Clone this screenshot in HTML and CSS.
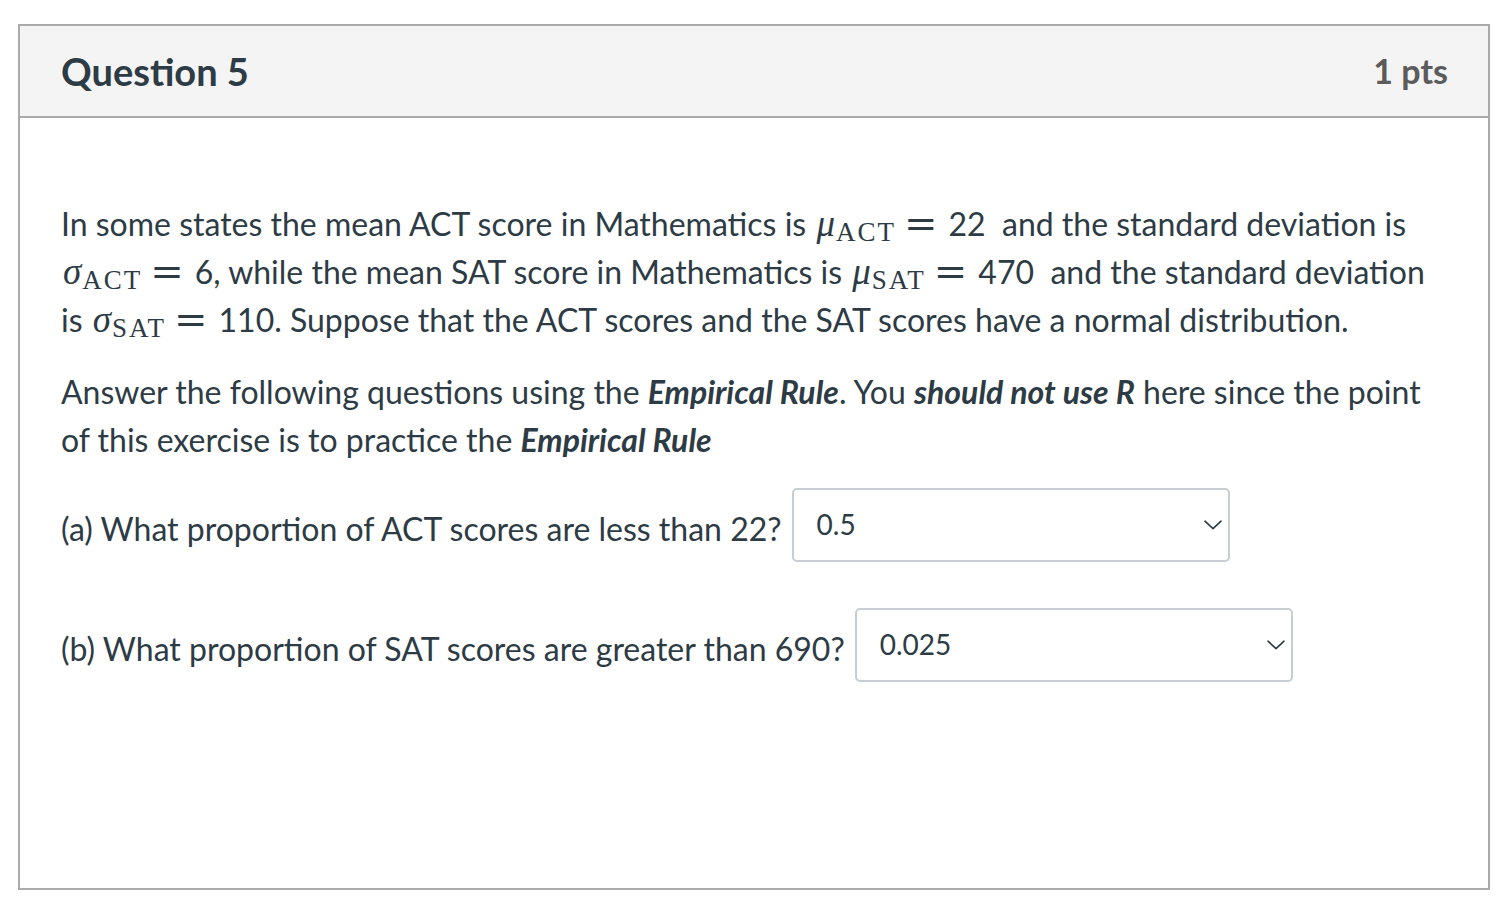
FILE: index.html
```html
<!DOCTYPE html>
<html lang="en">
<head>
<meta charset="utf-8">
<title>Question 5</title>
<link rel="stylesheet" href="styles.css">
</head>
<body>
<div class="quiz-question">
  <div class="q-header">
    <h2 class="q-title">Question 5</h2>
    <span class="q-pts">1 pts</span>
  </div>
  <div class="q-body">
    <p class="q-text">In some states the mean ACT score in Mathematics is <span class="math"><span class="mi">μ</span><span class="sub">ACT</span><span class="mo">=</span><span class="mn">22</span></span> &nbsp;and the standard deviation is <span class="math"><span class="mi">σ</span><span class="sub">ACT</span><span class="mo">=</span><span class="mn">6</span></span>, while the mean SAT score in Mathematics is <span class="math"><span class="mi">μ</span><span class="sub">SAT</span><span class="mo">=</span><span class="mn">470</span></span> &nbsp;and the standard deviation is <span class="math"><span class="mi">σ</span><span class="sub">SAT</span><span class="mo">=</span><span class="mn">110</span></span>. Suppose that the ACT scores and the SAT scores have a normal distribution.</p>
    <p class="q-text">Answer the following questions using the <strong><em>Empirical Rule</em></strong>. You <strong><em>should not use R</em></strong> here since the point of this exercise is to practice the <strong><em>Empirical Rule</em></strong></p>
    <div class="answer-row">
      <label class="answer-label" for="ans-a">(a) What proportion of ACT scores are less than 22?</label>
      <div class="select-wrap">
        <select id="ans-a" class="answer-select"><option>0.5</option></select>
        <svg class="chevron" viewBox="0 0 18 10" width="18" height="10"><path d="M1 1.2 L9 8.6 L17 1.2" fill="none" stroke="#2d3b45" stroke-width="1.6" stroke-linecap="round" stroke-linejoin="round"/></svg>
      </div>
    </div>
    <div class="answer-row">
      <label class="answer-label" for="ans-b">(b) What proportion of SAT scores are greater than 690?</label>
      <div class="select-wrap">
        <select id="ans-b" class="answer-select"><option>0.025</option></select>
        <svg class="chevron" viewBox="0 0 18 10" width="18" height="10"><path d="M1 1.2 L9 8.6 L17 1.2" fill="none" stroke="#2d3b45" stroke-width="1.6" stroke-linecap="round" stroke-linejoin="round"/></svg>
      </div>
    </div>
  </div>
</div>
</body>
</html>
```
FILE: styles.css
```css
* { box-sizing: border-box; }

html, body {
  margin: 0;
  background: #ffffff;
}

body {
  padding: 24px 18px 20px 18px;
  font-family: Lato, "Noto Sans", sans-serif;
  color: #2d3b45;
}

.quiz-question {
  border: 2px solid #aaaaaa;
  height: 866px;
  display: flex;
  flex-direction: column;
}

.q-header {
  height: 92px;
  flex: none;
  background: #f4f4f4;
  border-bottom: 2px solid #aaaaaa;
  display: flex;
  align-items: center;
  justify-content: space-between;
  padding: 0 40px 0 41px;
}

.q-title {
  margin: 0;
  font-size: 38px;
  font-weight: 700;
  color: #2d3b45;
  line-height: 1;
}

.q-pts {
  font-size: 34px;
  font-weight: 700;
  color: #5b5b5b;
  line-height: 1;
}

.q-body {
  flex: 1;
  padding: 82px 40px 0 41px;
}

.q-text {
  margin: 0 0 24px 0;
  font-size: 32px;
  line-height: 48px;
}

.q-text strong em {
  font-weight: 700;
  font-style: italic;
}

.math {
  white-space: nowrap;
  line-height: 1;
}

.mi {
  font-family: "Liberation Serif", serif;
  font-style: italic;
  font-size: 37px;
  line-height: 1;
  margin-left: 2px;
}

.sub {
  font-family: "Liberation Serif", serif;
  font-size: 27px;
  letter-spacing: 2px;
  line-height: 1;
  vertical-align: -5px;
  margin-left: 1px;
}

.mo {
  font-family: "DejaVu Serif", serif;
  font-size: 40px;
  line-height: 1;
  vertical-align: -1px;
  margin: 0 11px 0 8px;
}

.mn {
  font-size: 32px;
}

.answer-row {
  display: flex;
  align-items: flex-start;
  gap: 10px;
  margin-top: 23px;
  margin-bottom: 46px;
}

.answer-label {
  font-size: 32px;
  line-height: 48px;
  margin-top: 17px;
}

.select-wrap {
  position: relative;
  flex: none;
  width: 438px;
  height: 74px;
}

.answer-select {
  appearance: none;
  -webkit-appearance: none;
  display: block;
  width: 438px;
  height: 74px;
  border: 2px solid #c7cdd1;
  border-radius: 5px;
  background: #ffffff;
  color: #2d3b45;
  font-family: Lato, "Noto Sans", sans-serif;
  font-size: 28px;
  padding: 0 40px 2px 23px;
  margin: 0;
}

.chevron {
  position: absolute;
  right: 8px;
  top: 32px;
  pointer-events: none;
}
```
